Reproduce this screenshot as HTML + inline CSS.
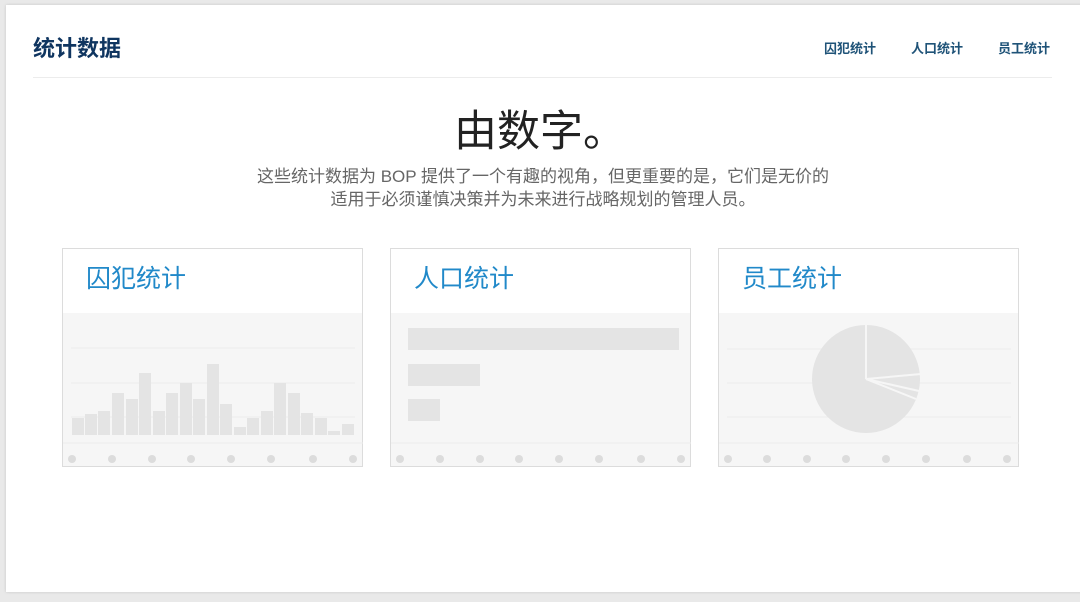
<!DOCTYPE html>
<html><head><meta charset="utf-8"><style>
*{margin:0;padding:0;box-sizing:border-box}
body{width:1080px;height:602px;background:#e9e9e9;position:relative;overflow:hidden;font-family:"Liberation Sans","Noto Sans CJK SC",sans-serif}
.page{position:absolute;left:6px;top:5px;width:1080px;height:587px;background:#fff;box-shadow:0 0 3px rgba(0,0,0,.15)}
.abs{position:absolute}
.brand{left:33px;top:36px;font-size:22px;font-weight:bold;color:#0f3560;line-height:26px}
.nav{top:41px;font-size:13px;font-weight:bold;color:#1f5378;line-height:16px}
.hr{left:33px;top:77px;width:1019px;height:1px;background:#ececec}
.title{left:0;width:1080px;top:107px;text-align:center;font-size:43px;color:#222;line-height:50px}
.sub{left:0;width:1086px;top:165px;text-align:center;font-size:17px;color:#666;line-height:23px}
.card{width:301px;height:219px;top:248px;border:1px solid #dcdcdc;background:#f6f6f6}
.card .hd{height:64px;background:#fff;font-size:25px;color:#2189c9;padding:15px 0 0 23px;line-height:30px}
</style></head><body>
<div class="page"></div>
<div class="abs brand">统计数据</div>
<div class="abs nav" style="left:824px">囚犯统计</div>
<div class="abs nav" style="left:911px">人口统计</div>
<div class="abs nav" style="left:998px">员工统计</div>
<div class="abs hr"></div>
<div class="abs title">由数字。</div>
<div class="abs sub">这些统计数据为 BOP 提供了一个有趣的视角，但更重要的是，它们是无价的<br>适用于必须谨慎决策并为未来进行战略规划的管理人员。</div>

<div class="abs card" style="left:62px"><div class="hd">囚犯统计</div>
<svg class="abs" style="left:0;top:64px" width="300" height="154">
<g stroke="#ececec"><line x1="8" x2="292" y1="35" y2="35"/><line x1="8" x2="292" y1="70" y2="70"/><line x1="8" x2="292" y1="104" y2="104"/><line x1="0" x2="300" y1="130" y2="130"/></g>
<g fill="#e4e4e4">
<rect x="9" y="105" width="12" height="17"/><rect x="22" y="101" width="12" height="21"/><rect x="35" y="98" width="12" height="24"/><rect x="49" y="80" width="12" height="42"/><rect x="63" y="86" width="12" height="36"/><rect x="76" y="60" width="12" height="62"/><rect x="90" y="98" width="12" height="24"/><rect x="103" y="80" width="12" height="42"/><rect x="117" y="70" width="12" height="52"/><rect x="130" y="86" width="12" height="36"/><rect x="144" y="51" width="12" height="71"/><rect x="157" y="91" width="12" height="31"/><rect x="171" y="114" width="12" height="8"/><rect x="184" y="105" width="12" height="17"/><rect x="198" y="98" width="12" height="24"/><rect x="211" y="70" width="12" height="52"/><rect x="225" y="80" width="12" height="42"/><rect x="238" y="100" width="12" height="22"/><rect x="252" y="105" width="12" height="17"/><rect x="265" y="118" width="12" height="4"/><rect x="279" y="111" width="12" height="11"/>
</g>
<g fill="#dcdcdc"><circle cx="9" cy="146" r="4"/><circle cx="49" cy="146" r="4"/><circle cx="89" cy="146" r="4"/><circle cx="128" cy="146" r="4"/><circle cx="168" cy="146" r="4"/><circle cx="208" cy="146" r="4"/><circle cx="250" cy="146" r="4"/><circle cx="290" cy="146" r="4"/></g>
</svg></div>

<div class="abs card" style="left:390px"><div class="hd">人口统计</div>
<svg class="abs" style="left:0;top:64px" width="300" height="154">
<line x1="0" x2="300" y1="130" y2="130" stroke="#ececec"/>
<g fill="#e4e4e4"><rect x="17" y="15" width="271" height="22"/><rect x="17" y="51" width="72" height="22"/><rect x="17" y="86" width="32" height="22"/></g>
<g fill="#dcdcdc"><circle cx="9" cy="146" r="4"/><circle cx="49" cy="146" r="4"/><circle cx="89" cy="146" r="4"/><circle cx="128" cy="146" r="4"/><circle cx="168" cy="146" r="4"/><circle cx="208" cy="146" r="4"/><circle cx="250" cy="146" r="4"/><circle cx="290" cy="146" r="4"/></g>
</svg></div>

<div class="abs card" style="left:718px"><div class="hd">员工统计</div>
<svg class="abs" style="left:0;top:64px" width="300" height="154">
<g stroke="#ececec"><line x1="8" x2="292" y1="36" y2="36"/><line x1="8" x2="292" y1="70" y2="70"/><line x1="8" x2="292" y1="104" y2="104"/><line x1="0" x2="300" y1="130" y2="130"/></g>
<circle cx="147" cy="66" r="54" fill="#e4e4e4"/>
<g stroke="#f6f6f6" stroke-width="2"><line x1="147" y1="66" x2="147" y2="10"/><line x1="147" y1="66" x2="202" y2="61"/><line x1="147" y1="66" x2="200" y2="78"/><line x1="147" y1="66" x2="197" y2="86"/></g>
<g fill="#dcdcdc"><circle cx="9" cy="146" r="4"/><circle cx="48" cy="146" r="4"/><circle cx="88" cy="146" r="4"/><circle cx="127" cy="146" r="4"/><circle cx="167" cy="146" r="4"/><circle cx="207" cy="146" r="4"/><circle cx="248" cy="146" r="4"/><circle cx="288" cy="146" r="4"/></g>
</svg></div>
</body></html>
